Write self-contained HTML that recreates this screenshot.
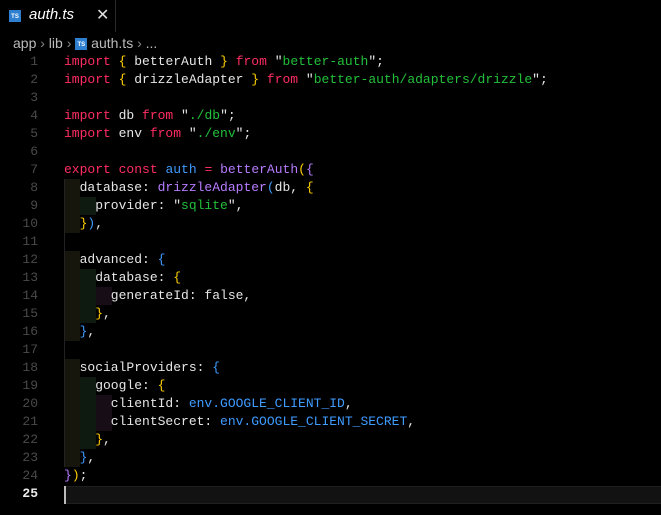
<!DOCTYPE html>
<html><head><style>
body{margin:0;width:661px;height:515px;background:#000;overflow:hidden;font-family:"Liberation Sans",sans-serif;position:relative}
.tab{position:absolute;left:0;top:0;width:115px;height:32px;color:#fff;font-style:italic;font-size:15px}
.ts{display:inline-block;background:#2f7fd0;color:#fff;font-size:6px;font-weight:bold;font-style:normal;width:12px;height:12px;line-height:15px;text-align:center;box-sizing:border-box;vertical-align:middle}
.div{position:absolute;left:115px;top:0;width:1px;height:32px;background:#2a2a2a}
.bc{position:absolute;left:13px;top:35px;color:#bbb;font-size:14px}
.code{position:absolute;left:0;top:53px;font-family:"Liberation Mono",monospace;font-size:13px}
.ln{position:absolute;width:38px;text-align:right;color:#4a4a4a;height:18px;line-height:18px}
.l{position:absolute;left:64px;height:18px;line-height:18px;white-space:pre;color:#e6e6e6}
.k{color:#ff2d62}.y{color:#ffd000}.s{color:#22c03a}.p{color:#b77cff}.b{color:#3e9bff}
.g{position:absolute;height:18px}
</style></head><body>
<div class="tab"><span class="ts" style="position:absolute;left:9px;top:10px">TS</span><span style="position:absolute;left:29px;top:6px">auth.ts</span><span style="position:absolute;left:96px;top:5px;font-style:normal;font-size:16px;color:#ddd">✕</span></div>
<div class="div"></div>
<div class="bc">app <span style="color:#888">›</span> lib <span style="color:#888">›</span> <span class="ts">TS</span> auth.ts <span style="color:#888">›</span> ...</div>
<div class="code">
<div class="g" style="left:64px;top:126px;width:16px;height:54px;background:#16160c"></div>
<div class="g" style="left:64px;top:198px;width:16px;height:90px;background:#16160c"></div>
<div class="g" style="left:64px;top:306px;width:16px;height:108px;background:#16160c"></div>
<div class="g" style="left:80px;top:144px;width:16px;height:18px;background:#0e190f"></div>
<div class="g" style="left:80px;top:216px;width:16px;height:54px;background:#0e190f"></div>
<div class="g" style="left:80px;top:324px;width:16px;height:72px;background:#0e190f"></div>
<div class="g" style="left:96px;top:234px;width:16px;height:18px;background:#160d16"></div>
<div class="g" style="left:96px;top:342px;width:16px;height:36px;background:#160d16"></div>
<div class="g" style="left:64px;top:126px;width:1px;height:288px;background:#222"></div>
<div class="g" style="left:64px;top:433px;width:597px;height:18px;background:#121212;border-top:1px solid #1f1f1f;border-bottom:1px solid #1f1f1f;box-sizing:border-box"></div>
<div class="g" style="left:64px;top:433px;width:2px;height:18px;background:#bbb"></div>
</div>
<div class="code" id="c"></div>
<script>
var L=[
'<span class="k">import</span> <span class="y">{</span> betterAuth <span class="y">}</span> <span class="k">from</span> "<span class="s">better-auth</span>";',
'<span class="k">import</span> <span class="y">{</span> drizzleAdapter <span class="y">}</span> <span class="k">from</span> "<span class="s">better-auth/adapters/drizzle</span>";',
'',
'<span class="k">import</span> db <span class="k">from</span> "<span class="s">./db</span>";',
'<span class="k">import</span> env <span class="k">from</span> "<span class="s">./env</span>";',
'',
'<span class="k">export</span> <span class="k">const</span> <span class="b">auth</span> <span class="k">=</span> <span class="p">betterAuth</span><span class="y">(</span><span class="p">{</span>',
'  database: <span class="p">drizzleAdapter</span><span class="b">(</span>db, <span class="y">{</span>',
'    provider: "<span class="s">sqlite</span>",',
'  <span class="y">}</span><span class="b">)</span>,',
'',
'  advanced: <span class="b">{</span>',
'    database: <span class="y">{</span>',
'      generateId: false,',
'    <span class="y">}</span>,',
'  <span class="b">}</span>,',
'',
'  socialProviders: <span class="b">{</span>',
'    google: <span class="y">{</span>',
'      clientId: <span class="b">env.GOOGLE_CLIENT_ID</span>,',
'      clientSecret: <span class="b">env.GOOGLE_CLIENT_SECRET</span>,',
'    <span class="y">}</span>,',
'  <span class="b">}</span>,',
'<span class="p">}</span><span class="y">)</span>;',
''];
var h='';for(var i=0;i<25;i++){h+='<div class="ln" style="top:'+(i*18)+'px'+(i==24?';color:#eee;font-weight:bold':'')+'">'+(i+1)+'</div><div class="l" style="top:'+(i*18)+'px">'+L[i]+'</div>';}
document.getElementById('c').innerHTML=h;
</script>
</body></html>
